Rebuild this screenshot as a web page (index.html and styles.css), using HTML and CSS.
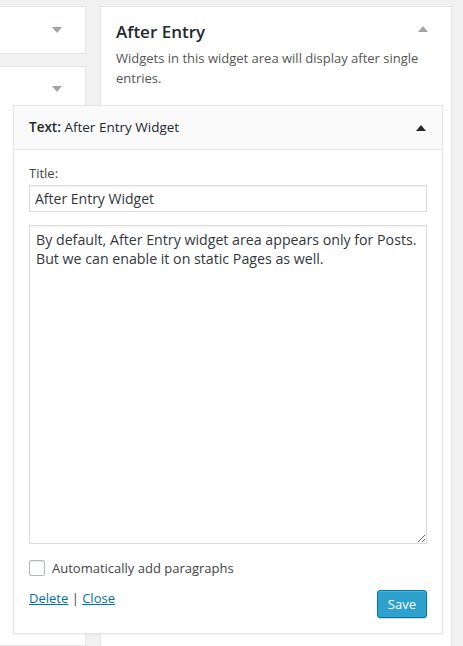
FILE: index.html
```html
<!DOCTYPE html>
<html lang="en">
<head>
<meta charset="utf-8">
<title>After Entry Widget</title>
<link rel="stylesheet" href="styles.css">
</head>
<body>
<div class="layout">
  <div class="left-col">
    <div class="mini-card short"><span class="arrow down"></span></div>
    <div class="mini-card tall"><span class="arrow down"></span></div>
  </div>
  <div class="right-col">
    <div class="area-head">
      <h2 class="area-title">After Entry</h2>
      <span class="arrow up"></span>
    </div>
    <p class="area-desc">Widgets in this widget area will display after single entries.</p>
    <div class="widget">
      <div class="widget-top">
        <div class="widget-title"><strong>Text:</strong> After Entry Widget</div>
        <span class="arrow up dark"></span>
      </div>
      <div class="widget-inside">
        <label class="field-label" for="title">Title:</label>
        <input class="field-input" id="title" type="text" value="After Entry Widget">
        <textarea class="field-text">By default, After Entry widget area appears only for Posts.
But we can enable it on static Pages as well.</textarea>
        <label class="check-row"><input type="checkbox" class="check"> Automatically add paragraphs</label>
        <div class="widget-actions">
          <div class="links"><a href="#">Delete</a> | <a href="#">Close</a></div>
          <button class="save-btn" type="button">Save</button>
        </div>
      </div>
    </div>
  </div>
</div>
</body>
</html>
```
FILE: styles.css
```css
html, body {
  margin: 0;
  padding: 0;
}
body {
  background: #f1f1f1;
  font-family: "Open Sans", "Noto Sans", sans-serif;
  font-size: 13px;
  color: #444;
  width: 463px;
  height: 646px;
  overflow: hidden;
}
.layout {
  display: flex;
  gap: 14px;
  padding-top: 6px;
  height: 640px;
}
.left-col {
  width: 86px;
  flex-shrink: 0;
  display: flex;
  flex-direction: column;
  gap: 12px;
}
.mini-card {
  background: #fff;
  border: 1px solid #e5e5e5;
  border-left: none;
  box-sizing: border-box;
  display: flex;
  justify-content: flex-end;
  padding-right: 23px;
}
.mini-card.short {
  height: 48px;
  align-items: center;
}
.mini-card.tall {
  flex: 1;
  align-items: flex-start;
  padding-top: 19px;
}
.arrow {
  display: inline-block;
  width: 0;
  height: 0;
  border-left: 5px solid transparent;
  border-right: 5px solid transparent;
}
.arrow.down {
  border-top: 6px solid #a0a5aa;
}
.arrow.up {
  border-bottom: 6px solid #a0a5aa;
}
.arrow.up.dark {
  border-bottom-color: #23282d;
}
.right-col {
  width: 352px;
  flex-shrink: 0;
  box-sizing: border-box;
  background: #fff;
  border: 1px solid #e5e5e5;
  border-bottom: none;
  padding: 0 15px;
}
.area-head {
  display: flex;
  justify-content: space-between;
  align-items: flex-start;
  padding-top: 11px;
}
.area-title {
  margin: 0;
  font-size: 17px;
  font-weight: 600;
  color: #23282d;
  line-height: 28px;
}
.area-head .arrow {
  margin-top: 8px;
  margin-right: 8px;
}
.area-desc {
  margin: 2px 0 0;
  font-size: 13px;
  line-height: 20px;
  color: #555;
}
.widget {
  margin: 17px -7px 0 -103px;
  background: #fff;
  border: 1px solid #e5e5e5;
  box-shadow: 0 1px 2px rgba(0, 0, 0, 0.06);
}
.widget-top {
  height: 43px;
  background: #fafafa;
  border-bottom: 1px solid #e5e5e5;
  display: flex;
  align-items: center;
  justify-content: space-between;
  padding: 0 16px 0 15px;
}
.widget-title {
  font-size: 13.5px;
  color: #23282d;
  margin-top: -1px;
}
.widget-title strong {
  font-weight: 600;
}
.widget-inside {
  padding: 14px 15px 15px;
  display: flex;
  flex-direction: column;
}
.field-label {
  font-size: 13px;
  line-height: 18px;
  color: #444;
}
.field-input {
  margin-top: 3px;
  height: 27px;
  box-sizing: border-box;
  border: 1px solid #ddd;
  box-shadow: inset 0 1px 2px rgba(0, 0, 0, 0.07);
  font-family: inherit;
  font-size: 14px;
  color: #32373c;
  padding: 0 5px;
  outline: none;
}
.field-text {
  margin-top: 13px;
  height: 319px;
  box-sizing: border-box;
  border: 1px solid #ddd;
  box-shadow: inset 0 1px 2px rgba(0, 0, 0, 0.07);
  font-family: inherit;
  font-size: 14.2px;
  line-height: 19px;
  color: #32373c;
  padding: 4px 2px 4px 6px;
  resize: both;
  outline: none;
}
.check-row {
  margin-top: 15px;
  display: flex;
  align-items: center;
  gap: 7px;
  font-size: 13px;
  color: #444;
  line-height: 18px;
}
.check {
  -webkit-appearance: none;
  appearance: none;
  margin: 0;
  width: 16px;
  height: 16px;
  border: 1px solid #b4b9be;
  border-radius: 2px;
  background: #fff;
  box-shadow: inset 0 1px 2px rgba(0, 0, 0, 0.1);
}
.widget-actions {
  margin-top: 13px;
  display: flex;
  justify-content: space-between;
  align-items: flex-start;
}
.links {
  font-size: 13px;
  line-height: 20px;
  color: #444;
  margin-top: -2px;
}
.links a {
  color: #0074a2;
  text-decoration: underline;
}
.save-btn {
  height: 28px;
  padding: 0 10px;
  background: #2ea2cc;
  border: 1px solid #0074a2;
  border-radius: 3px;
  box-shadow: inset 0 1px 0 rgba(120, 200, 230, 0.5), 0 1px 0 rgba(0, 0, 0, 0.15);
  color: #fff;
  font-family: inherit;
  font-size: 13px;
  line-height: 26px;
  cursor: pointer;
}
```
